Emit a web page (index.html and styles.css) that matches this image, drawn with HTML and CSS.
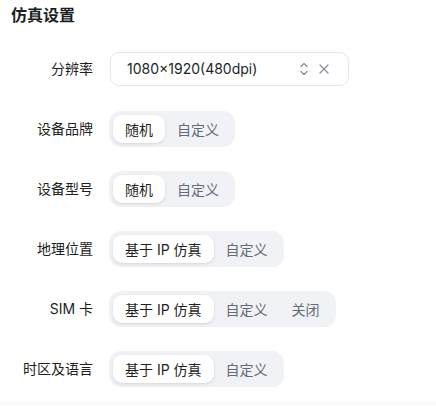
FILE: index.html
```html
<!DOCTYPE html>
<html lang="zh-CN">
<head>
<meta charset="utf-8">
<title>仿真设置</title>
<link rel="stylesheet" href="styles.css">
</head>
<body>
<div class="page">
  <h2 class="title">仿真设置</h2>
  <div class="form">
    <div class="row">
      <label class="label">分辨率</label>
      <div class="select">
        <span class="select-value">1080×1920(480dpi)</span>
        <span class="select-icons">
          <svg class="ico-updown" width="8" height="14" viewBox="0 0 8 14" fill="none" stroke="#8a8f99" stroke-width="1.3" stroke-linecap="round" stroke-linejoin="round"><path d="M1 4.5 L4 1.5 L7 4.5"/><path d="M1 9.5 L4 12.5 L7 9.5"/></svg>
          <svg class="ico-x" width="10" height="10" viewBox="0 0 10 10" fill="none" stroke="#8a8f99" stroke-width="1.3" stroke-linecap="round"><path d="M1 1 L9 9"/><path d="M9 1 L1 9"/></svg>
        </span>
      </div>
    </div>
    <div class="row">
      <label class="label">设备品牌</label>
      <div class="seg">
        <span class="seg-item active">随机</span>
        <span class="seg-item">自定义</span>
      </div>
    </div>
    <div class="row">
      <label class="label">设备型号</label>
      <div class="seg">
        <span class="seg-item active">随机</span>
        <span class="seg-item">自定义</span>
      </div>
    </div>
    <div class="row">
      <label class="label">地理位置</label>
      <div class="seg">
        <span class="seg-item active">基于 IP 仿真</span>
        <span class="seg-item">自定义</span>
      </div>
    </div>
    <div class="row">
      <label class="label">SIM 卡</label>
      <div class="seg">
        <span class="seg-item active">基于 IP 仿真</span>
        <span class="seg-item">自定义</span>
        <span class="seg-item">关闭</span>
      </div>
    </div>
    <div class="row">
      <label class="label">时区及语言</label>
      <div class="seg">
        <span class="seg-item active">基于 IP 仿真</span>
        <span class="seg-item">自定义</span>
      </div>
    </div>
  </div>
</div>
<div class="footer-band"></div>
</body>
</html>
```
FILE: styles.css
```css
* { box-sizing: border-box; }
html, body { margin: 0; padding: 0; background: #ffffff; }
body {
  font-family: Inter, "Noto Sans CJK SC", "Noto Sans", sans-serif;
  color: #1c1f23;
  width: 436px;
  height: 406px;
  overflow: hidden;
}
.page {
  height: 401px;
  padding: 3px 0 0 0;
}
.title {
  margin: 0 0 0 11px;
  font-size: 16px;
  font-weight: 700;
  line-height: 24px;
  color: #1c1f23;
}
.form {
  margin-top: 24px;
  display: flex;
  flex-direction: column;
  gap: 24px;
}
.row {
  display: flex;
  align-items: center;
  height: 36px;
}
.label {
  width: 93px;
  text-align: right;
  font-size: 14px;
  line-height: 20px;
  margin-right: 16px;
  color: #1c1f23;
}
.select {
  width: 239px;
  height: 34px;
  border: 1px solid #e3e6eb;
  border-radius: 9px;
  display: flex;
  align-items: center;
  justify-content: space-between;
  padding: 0 19px 0 16px;
  margin-left: 1px;
}
.select-value {
  font-size: 14px;
  line-height: 20px;
  color: #1c1f23;
}
.select-icons {
  display: flex;
  align-items: center;
  gap: 11px;
}
.ico-updown, .ico-x { display: block; }
.seg {
  display: flex;
  background: #f0f2f6;
  border-radius: 12px;
  padding: 4px;
  height: 36px;
}
.seg-item {
  height: 28px;
  padding: 0 12px;
  display: flex;
  align-items: center;
  font-size: 14px;
  color: #636b78;
  border-radius: 9px;
  white-space: nowrap;
}
.seg-item.active {
  background: #ffffff;
  color: #1c1f23;
  box-shadow: 0 1px 3px rgba(0, 0, 0, 0.12);
}
.footer-band {
  height: 5px;
  background: #fafafa;
}
```
